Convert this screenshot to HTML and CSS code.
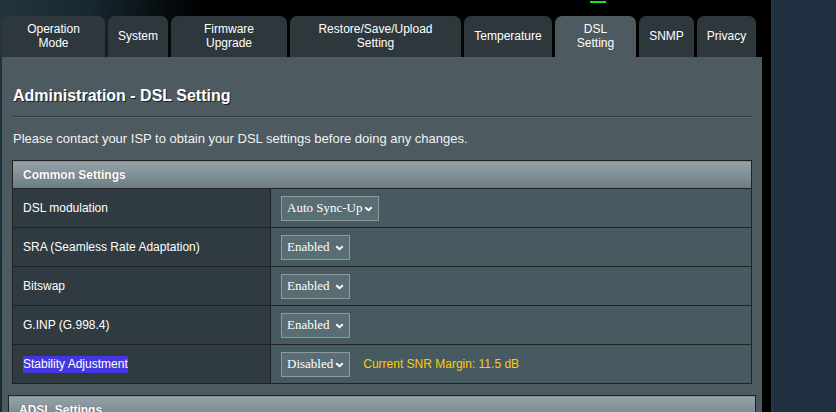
FILE: index.html
```html
<!DOCTYPE html>
<html>
<head>
<meta charset="utf-8">
<link rel="stylesheet" href="styles.css">
</head>
<body>
<div class="page">
  <div class="main">
    <div class="green-mark"></div>
    <div class="tabs">
      <div class="tab w1">Operation<br>Mode</div>
      <div class="tab w2">System</div>
      <div class="tab w3">Firmware<br>Upgrade</div>
      <div class="tab w4">Restore/Save/Upload<br>Setting</div>
      <div class="tab w5">Temperature</div>
      <div class="tab w6 active">DSL<br>Setting</div>
      <div class="tab w7">SNMP</div>
      <div class="tab w8">Privacy</div>
    </div>
    <div class="panel">
      <div class="title">Administration - DSL Setting</div>
      <div class="desc">Please contact your ISP to obtain your DSL settings before doing any changes.</div>
      <table class="settings">
        <thead>
          <tr><th colspan="2">Common Settings</th></tr>
        </thead>
        <tbody>
          <tr>
            <td class="label">DSL modulation</td>
            <td class="value"><span class="select">Auto Sync-Up<svg class="chev" viewBox="0 0 10 7" width="9" height="6"><path d="M1.2 1.4 L5 5 L8.8 1.4" fill="none" stroke="#fff" stroke-width="2.2"/></svg></span></td>
          </tr>
          <tr>
            <td class="label">SRA (Seamless Rate Adaptation)</td>
            <td class="value"><span class="select">Enabled<svg class="chev" viewBox="0 0 10 7" width="9" height="6"><path d="M1.2 1.4 L5 5 L8.8 1.4" fill="none" stroke="#fff" stroke-width="2.2"/></svg></span></td>
          </tr>
          <tr>
            <td class="label">Bitswap</td>
            <td class="value"><span class="select">Enabled<svg class="chev" viewBox="0 0 10 7" width="9" height="6"><path d="M1.2 1.4 L5 5 L8.8 1.4" fill="none" stroke="#fff" stroke-width="2.2"/></svg></span></td>
          </tr>
          <tr>
            <td class="label">G.INP (G.998.4)</td>
            <td class="value"><span class="select">Enabled<svg class="chev" viewBox="0 0 10 7" width="9" height="6"><path d="M1.2 1.4 L5 5 L8.8 1.4" fill="none" stroke="#fff" stroke-width="2.2"/></svg></span></td>
          </tr>
          <tr>
            <td class="label"><span class="hl">Stability Adjustment</span></td>
            <td class="value"><span class="select">Disabled<svg class="chev" viewBox="0 0 10 7" width="9" height="6"><path d="M1.2 1.4 L5 5 L8.8 1.4" fill="none" stroke="#fff" stroke-width="2.2"/></svg></span><span class="snr">Current SNR Margin: 11.5 dB</span></td>
          </tr>
        </tbody>
      </table>
      <table class="settings adsl">
        <thead>
          <tr><th>ADSL Settings</th></tr>
        </thead>
      </table>
    </div>
  </div>
  <div class="gutter"></div>
  <div class="side"></div>
</div>
</body>
</html>
```

FILE: styles.css
```css
* { box-sizing: border-box; }
html, body {
  margin: 0;
  padding: 0;
  background: #000;
  width: 836px;
  height: 412px;
  overflow: hidden;
  font-family: "Liberation Sans", Arial, sans-serif;
  color: #fff;
}
.page {
  display: flex;
  height: 412px;
}
.main {
  position: relative;
  width: 762px;
  flex: none;
  padding: 16px 0 0 2px;
  background: linear-gradient(100deg, #22353e 0px, #172830 90px, #050a0c 170px, #000 200px);
}
.green-mark {
  position: absolute;
  left: 590px;
  top: 1px;
  width: 16px;
  height: 2px;
  background: #1ee01e;
}
.tabs {
  display: flex;
  gap: 3px;
  height: 41px;
}
.tab {
  height: 41px;
  background: #2e383c;
  border-radius: 7px 7px 0 0;
  display: flex;
  align-items: center;
  justify-content: center;
  text-align: center;
  font-size: 12px;
  line-height: 14px;
  color: #fff;
  padding-bottom: 1px;
}
.tab.active { background: #4d5a5f; }
.w1 { width: 103px; }
.w2 { width: 60px; }
.w3 { width: 116px; }
.w4 { width: 171px; }
.w5 { width: 88px; }
.w6 { width: 81px; }
.w7 { width: 55px; }
.w8 { width: 59px; }
.panel {
  background: #4d5a5f;
  height: 355px;
  padding: 0 10px;
}
.title {
  margin-left: 1px;
  padding-top: 29px;
  height: 60px;
  padding-bottom: 10px;
  font-size: 16px;
  line-height: 20px;
  font-weight: bold;
  text-shadow: 1px 1px 0 #1b2124;
  border-bottom: 1px solid #2f383b;
  box-shadow: 0 1px 0 #5e6a6f;
}
.desc {
  margin: 14px 0 0 1px;
  font-size: 13px;
  line-height: 16px;
  color: #f2f2f2;
}
.settings {
  width: 740px;
  margin-top: 13px;
  border-collapse: collapse;
  border: 1px solid #222;
}
.settings th {
  height: 28px;
  padding: 0 0 0 10px;
  text-align: left;
  font-size: 12px;
  font-weight: bold;
  background: linear-gradient(#95a3a9, #6c7d84);
  border-bottom: 1px solid #222;
  text-shadow: 0 0 1px #555;
}
.settings td {
  height: 39px;
  border: 1px solid #222;
  font-size: 12px;
  padding: 0;
}
.label {
  width: 258px;
  background: #2f3b40;
  padding-left: 10px !important;
}
.value {
  background: #475a60;
  padding-left: 10px !important;
}
.hl {
  background: #4537e0;
  padding: 1px 0 2px;
}
.select {
  position: relative;
  display: inline-flex;
  align-items: center;
  vertical-align: middle;
  height: 25px;
  min-width: 69px;
  padding: 0 16px 0 5px;
  background: #586e74;
  border: 1px solid #8d9b9f;
  font-family: "Liberation Serif", "Times New Roman", serif;
  font-size: 13px;
  color: #fff;
}
.chev {
  position: absolute;
  right: 5px;
  top: 9px;
}
.snr {
  display: inline-block;
  vertical-align: middle;
  margin-left: 13px;
  color: #ffcc00;
  font-size: 12px;
}
.adsl {
  width: 748px;
  margin: 11px -4px 0;
}
.gutter {
  width: 9px;
  flex: none;
  background: #000;
}
.side {
  flex: 1;
  background: linear-gradient(90deg, #2a3846 0px, #213040 4px, #213040 100%);
}
```
